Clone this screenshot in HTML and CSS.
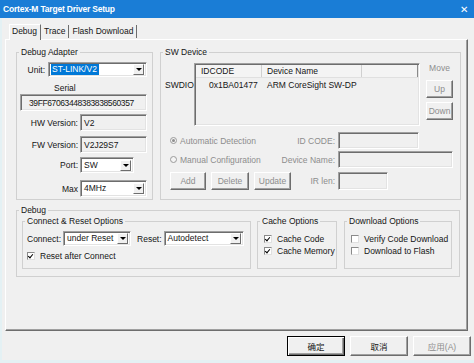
FILE: index.html
```html
<!DOCTYPE html>
<html>
<head>
<meta charset="utf-8">
<link rel="stylesheet" href="styles.css">
</head>
<body>
<div class="window">
  <div class="titlebar">
    <span class="title">Cortex-M Target Driver Setup</span>
    <span class="close">✕</span>
  </div>
  <div class="tabs">
    <span class="tab active">Debug</span>
    <span class="tab">Trace</span>
    <span class="tab">Flash Download</span>
  </div>
  <div class="panel">
    <div class="toprow">
      <fieldset class="group adapter">
        <legend>Debug Adapter</legend>
        <div class="row unit-row">
          <span class="lbl unit-lbl">Unit:</span>
          <span class="select unit-sel"><span class="sel-text hl">ST-LINK/V2</span><span class="arrow"></span></span>
        </div>
        <div class="serial-lbl">Serial</div>
        <div class="field serial">39FF67063448383838560357</div>
        <div class="row hw-row">
          <span class="lbl vlbl">HW Version:</span>
          <span class="field ver">V2</span>
        </div>
        <div class="row fw-row">
          <span class="lbl vlbl">FW Version:</span>
          <span class="field ver">V2J29S7</span>
        </div>
        <div class="row port-row">
          <span class="lbl vlbl">Port:</span>
          <span class="select port-sel"><span class="sel-text">SW</span><span class="arrow"></span></span>
        </div>
        <div class="row max-row">
          <span class="lbl vlbl">Max</span>
          <span class="select max-sel"><span class="sel-text">4MHz</span><span class="arrow"></span></span>
        </div>
      </fieldset>
      <fieldset class="group swdev">
        <legend>SW Device</legend>
        <div class="sw-top">
          <span class="swdio">SWDIO</span>
          <div class="devtable">
            <div class="thead">
              <span class="th c1">IDCODE</span>
              <span class="th c2">Device Name</span>
              <span class="th c3"></span>
            </div>
            <div class="trow">
              <span class="td c1">0x1BA01477</span>
              <span class="td c2">ARM CoreSight SW-DP</span>
            </div>
          </div>
          <div class="move-col">
            <span class="move-lbl">Move</span>
            <span class="btn dis up-btn">Up</span>
            <span class="btn dis down-btn">Down</span>
          </div>
        </div>
        <div class="cfg-row row-a">
          <span class="radio-cell"><span class="radio on"></span><span class="dis-text">Automatic Detection</span></span>
          <span class="cfg-lbl dis-text">ID CODE:</span>
          <span class="field dis-field idcode"></span>
        </div>
        <div class="cfg-row row-b">
          <span class="radio-cell"><span class="radio"></span><span class="dis-text">Manual Configuration</span></span>
          <span class="cfg-lbl dis-text">Device Name:</span>
          <span class="field dis-field devname"></span>
        </div>
        <div class="cfg-row row-c">
          <span class="btn-cell">
            <span class="btn dis add-btn">Add</span>
            <span class="btn dis del-btn">Delete</span>
            <span class="btn dis upd-btn">Update</span>
          </span>
          <span class="cfg-lbl irlbl dis-text">IR len:</span>
          <span class="field dis-field irlen"></span>
        </div>
      </fieldset>
    </div>
    <fieldset class="group debug">
      <legend>Debug</legend>
      <div class="debug-row">
        <fieldset class="group connect">
          <legend>Connect &amp; Reset Options</legend>
          <div class="conn-row">
            <span class="lbl">Connect:</span>
            <span class="select conn-sel"><span class="sel-text">under Reset</span><span class="arrow"></span></span>
            <span class="lbl reset-lbl">Reset:</span>
            <span class="select reset-sel"><span class="sel-text">Autodetect</span><span class="arrow"></span></span>
          </div>
          <div class="check-line rac"><span class="check on"></span><span>Reset after Connect</span></div>
        </fieldset>
        <fieldset class="group cache">
          <legend>Cache Options</legend>
          <div class="check-line first"><span class="check on"></span><span>Cache Code</span></div>
          <div class="check-line"><span class="check on"></span><span>Cache Memory</span></div>
        </fieldset>
        <fieldset class="group download">
          <legend>Download Options</legend>
          <div class="check-line first"><span class="check"></span><span>Verify Code Download</span></div>
          <div class="check-line"><span class="check"></span><span>Download to Flash</span></div>
        </fieldset>
      </div>
    </fieldset>
  </div>
  <div class="buttons">
    <span class="btn big default">确定</span>
    <span class="btn big">取消</span>
    <span class="btn big dis">应用(A)</span>
  </div>
</div>
</body>
</html>
```

FILE: styles.css
```css
* { box-sizing: border-box; }

html, body {
  margin: 0;
  padding: 0;
}

body {
  width: 474px;
  height: 363px;
  overflow: hidden;
  background: #f0f0f0;
  font-family: "Liberation Sans", "Noto Sans CJK SC", Arial, sans-serif;
  font-size: 8.5px;
  color: #151515;
}

.window {
  height: 363px;
  border-left: 2px solid #e4f1f4;
  border-bottom: 3px solid #e4f1f4;
}

.titlebar {
  height: 18px;
  margin-left: -2px;
  background: #1a7dd6;
  color: #fff;
  display: flex;
  align-items: center;
  justify-content: space-between;
  padding: 0 6px 0 3px;
}

.title {
  font-size: 8.5px;
  font-weight: bold;
  letter-spacing: -0.2px;
}

.close {
  font-size: 10px;
}

/* Tabs */
.tabs {
  display: flex;
  height: 15px;
  margin: 6px 0 0 7px;
  position: relative;
  z-index: 1;
}

.tab {
  line-height: 13px;
  padding: 0 3px 0 3px;
  border-right: 1px solid #6d6d6d;
  margin-top: 1px;
  height: 13px;
}

.tab.active {
  border-left: 1px solid #fff;
  border-top: 1px solid #fff;
  margin-top: 0;
  height: 16px;
  line-height: 13px;
  padding: 0 3px 0 2px;
  background: #f0f0f0;
}

/* Panel */
.panel {
  margin: 0 6px 0 3px;
  height: 292px;
  border: 1px solid;
  border-color: #fff #6d6d6d #6d6d6d #fff;
  box-shadow: inset -1px -1px #a0a0a0;
  padding: 7px 6px 0 10px;
}

.toprow {
  display: flex;
  gap: 7px;
}

.group {
  margin: 0;
  padding: 0;
  border: 1px solid #d0d0d0;
  min-width: 0;
}

.group > legend {
  padding: 0 2px;
  margin-left: 2px;
  line-height: 10px;
  height: 10px;
}

/* Debug Adapter */
.adapter {
  width: 137px;
  height: 153px;
}

.row {
  display: flex;
  align-items: center;
}

.lbl {
  white-space: nowrap;
}

.unit-row {
  margin-top: 5px;
  height: 15px;
}

.unit-lbl {
  width: 28px;
  text-align: right;
  margin-right: 3px;
}

.select {
  display: flex;
  align-items: center;
  background: #fff;
  border: 1px solid;
  border-color: #a0a0a0 #fff #fff #a0a0a0;
  box-shadow: inset 1px 1px #6d6d6d, inset -1px -1px #e3e3e3;
  padding: 2px;
  height: 15px;
}

.sel-text {
  flex: 1;
  padding-left: 1px;
  line-height: 11px;
  white-space: nowrap;
  overflow: hidden;
}

.sel-text.hl {
  flex: 0 0 auto;
  background: #0078d7;
  color: #fff;
  padding: 0 2px 0 1px;
  margin-right: auto;
}

.arrow {
  flex: 0 0 auto;
  width: 11px;
  height: 11px;
  background: #f0f0f0;
  border: 1px solid;
  border-color: #fff #6d6d6d #6d6d6d #fff;
  position: relative;
}

.arrow::after {
  content: "";
  position: absolute;
  left: 2px;
  top: 3px;
  border-left: 3px solid transparent;
  border-right: 3px solid transparent;
  border-top: 3px solid #000;
}

.unit-sel {
  width: 99px;
}

.serial-lbl {
  margin: 6px 0 0 37px;
  height: 11px;
  line-height: 11px;
}

.field {
  display: flex;
  align-items: center;
  background: #f0f0f0;
  border: 1px solid;
  border-color: #a0a0a0 #fff #fff #a0a0a0;
  box-shadow: inset 1px 1px #6d6d6d, inset -1px -1px #e3e3e3;
  padding: 0 3px;
  white-space: nowrap;
  overflow: hidden;
}

.serial {
  margin: 0 0 0 3px;
  width: 127px;
  height: 17px;
  padding-left: 8px;
  letter-spacing: -0.4px;
}

.vlbl {
  width: 61px;
  text-align: right;
  margin-right: 2px;
}

.hw-row { margin-top: 3px; height: 17px; }
.fw-row { margin-top: 5px; height: 17px; }
.port-row { margin-top: 4px; height: 16px; }
.max-row { margin-top: 7px; height: 17px; }

.ver {
  width: 67px;
  height: 17px;
}

.port-sel { width: 54px; height: 16px; }
.max-sel { width: 67px; height: 17px; }

/* SW Device */
.swdev {
  width: 301px;
  height: 153px;
}

.sw-top {
  display: flex;
  align-items: flex-start;
  margin-top: 6px;
  padding-left: 4px;
}

.swdio {
  width: 29px;
  margin-top: 17px;
  line-height: 11px;
}

.devtable {
  width: 226px;
  height: 63px;
  border: 1px solid;
  border-color: #a0a0a0 #fff #fff #a0a0a0;
  box-shadow: inset 1px 1px #6d6d6d, inset -1px -1px #e3e3e3;
  padding: 1px;
  background: #f0f0f0;
}

.thead {
  display: flex;
  height: 13px;
  line-height: 13px;
  background: #f4f4f4;
  border-bottom: 1px solid #e0e0e0;
}

.th {
  border-right: 1px solid #d0d0d0;
  padding-left: 5px;
  white-space: nowrap;
}

.th.c1, .td.c1 { width: 66px; }
.th.c2, .td.c2 { width: 100px; }
.th.c3 { flex: 1; border-right: 1px solid #8a8a8a; }

.trow {
  display: flex;
  height: 14px;
  line-height: 14px;
}

.td {
  white-space: nowrap;
}

.td.c1 { padding-left: 13px; }
.td.c2 { padding-left: 5px; }

.move-col {
  display: flex;
  flex-direction: column;
  align-items: stretch;
  margin-left: 6px;
  width: 27px;
}

.move-lbl {
  height: 11px;
  line-height: 11px;
  text-align: center;
  color: #8d8d8d;
}

.btn {
  display: flex;
  align-items: center;
  justify-content: center;
  background: #f0f0f0;
  border: 1px solid;
  border-color: #fff #6d6d6d #6d6d6d #fff;
  box-shadow: inset -1px -1px #a0a0a0;
  white-space: nowrap;
}

.btn.dis,
.dis-text {
  color: #8d8d8d;
}

.up-btn { height: 18px; margin-top: 6px; }
.down-btn { height: 18px; margin-top: 4px; }

.cfg-row {
  display: flex;
  align-items: center;
}

.row-a { margin-top: 6px; height: 17px; }
.row-b { margin-top: 2px; height: 17px; }
.row-c { margin-top: 4px; height: 18px; }

.radio-cell {
  display: flex;
  align-items: center;
  width: 112px;
  padding-left: 9px;
  white-space: nowrap;
}

.radio {
  width: 7px;
  height: 7px;
  border-radius: 50%;
  border: 1px solid #9a9a9a;
  background: #f4f4f4;
  margin-right: 3px;
  position: relative;
}

.radio.on::after {
  content: "";
  position: absolute;
  left: 1px;
  top: 1px;
  width: 3px;
  height: 3px;
  border-radius: 50%;
  background: #8d8d8d;
}

.cfg-lbl {
  width: 62px;
  text-align: right;
  white-space: nowrap;
  margin-right: 3px;
}

.dis-field {
  height: 17px;
}

.idcode { width: 81px; }
.devname { width: 115px; }

.btn-cell {
  display: flex;
  gap: 5px;
  padding-left: 9px;
  width: 130px;
}

.btn-cell .btn { height: 18px; }
.add-btn { width: 36px; }
.del-btn { width: 38px; }
.upd-btn { width: 37px; }

.irlbl { width: 44px; }
.irlen { width: 50px; height: 18px; }

/* Debug group */
.debug {
  margin-top: 5px;
  width: 444px;
  height: 72px;
}

.debug-row {
  display: flex;
  margin-top: 1px;
  padding-left: 5px;
}

.connect {
  width: 229px;
  height: 53px;
}

.cache {
  width: 80px;
  height: 53px;
  margin-left: 6px;
}

.download {
  width: 108px;
  height: 53px;
  margin-left: 7px;
  overflow: hidden;
}

.conn-row {
  display: flex;
  align-items: center;
  margin-top: 5px;
  height: 15px;
  padding-left: 4px;
}

.conn-sel { width: 68px; margin-left: 2px; }
.reset-lbl { margin-left: 6px; }
.reset-sel { width: 80px; margin-left: 2px; }

.check-line {
  display: flex;
  align-items: center;
  height: 12px;
  padding-left: 6px;
  white-space: nowrap;
}

.download .check-line {
  overflow: hidden;
  margin-right: 2px;
}

.check-line.first { margin-top: 7px; }
.rac { margin-top: 4px; padding-left: 4px; }

.check {
  flex: 0 0 auto;
  width: 8px;
  height: 8px;
  border: 1px solid;
  border-color: #8a8a8a #e0e0e0 #e0e0e0 #8a8a8a;
  background: #fff;
  margin-right: 5px;
  position: relative;
}

.check.on::after {
  content: "";
  position: absolute;
  left: 1px;
  top: 0;
  width: 2px;
  height: 4px;
  border-right: 1.5px solid #000;
  border-bottom: 1.5px solid #000;
  transform: rotate(40deg);
}

/* Bottom buttons */
.buttons {
  display: flex;
  justify-content: flex-end;
  gap: 5px;
  margin: 5px 3px 0 0;
}

.btn.big {
  width: 58px;
  height: 20px;
  font-size: 8.5px;
}

.btn.default {
  border-color: #000;
  box-shadow: inset 1px 1px #fff, inset -1px -1px #6d6d6d, inset -2px -2px #a0a0a0;
}
```
